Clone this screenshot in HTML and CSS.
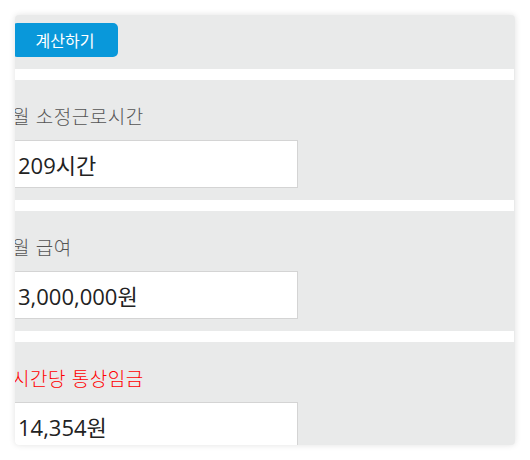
FILE: index.html
```html
<!DOCTYPE html>
<html lang="ko">
<head>
    <meta charset="UTF-8">
    <title>통상임금 계산기</title>
    <link rel="stylesheet" href="styles.css">
</head>
<body>
    <div class="card">
        <div class="form">
            <div class="button-row">
                <button class="calc-button" id="calc-button">계산하기</button>
            </div>

            <div class="divider"></div>
            <div class="field">
                <label class="field-label" for="hours">월 소정근로시간</label>
                <input class="field-input" id="hours" type="text" value="209시간">
            </div>

            <div class="divider"></div>
            <div class="field">
                <label class="field-label" for="salary">월 급여</label>
                <input class="field-input" id="salary" type="text" value="3,000,000원">
            </div>

            <div class="divider"></div>
            <div class="field">
                <label class="field-label result" for="wage">시간당 통상임금</label>
                <input class="field-input" id="wage" type="text" value="14,354원" readonly>
            </div>
        </div>
    </div>
</body>
</html>
```

FILE: styles.css
```css
body {
    margin: 0;
    padding: 15px;
    background-color: #ffffff;
    font-family: "Open Sans", "Noto Sans CJK KR", sans-serif;
}
.card {
    height: 430px;
    background-color: #e9eaea;
    border-radius: 4px;
    box-shadow: 0 0 6px rgba(0, 0, 0, 0.12);
    overflow: hidden;
}
.form {
    margin-left: -3px;
    padding-top: 8px;
}
.button-row {
    margin-bottom: 12px;
}
.calc-button {
    display: block;
    width: 106px;
    height: 34px;
    border: none;
    border-radius: 5px;
    background-color: #0998da;
    color: #ffffff;
    font-family: "Noto Sans CJK KR", sans-serif;
    font-size: 16px;
    cursor: pointer;
}
.divider {
    height: 11px;
    margin-left: 3px;
    margin-right: 1px;
    background-color: #ffffff;
}
.field {
    padding: 24px 0 12px;
}
.field-label {
    display: block;
    height: 24px;
    margin-bottom: 12px;
    font-family: "Noto Sans CJK KR", sans-serif;
    font-size: 19px;
    font-weight: 300;
    letter-spacing: 0.5px;
    line-height: 24px;
    color: #555555;
}
.field-label.result {
    color: #ff0000;
}
.field-input {
    display: block;
    box-sizing: border-box;
    width: 286px;
    height: 48px;
    margin: 0;
    padding: 0 5px;
    border: 1px solid #d4d4d4;
    background-color: #ffffff;
    font-family: "Open Sans", "Noto Sans CJK KR", sans-serif;
    font-size: 22px;
    color: #222222;
    outline: none;
}
```
